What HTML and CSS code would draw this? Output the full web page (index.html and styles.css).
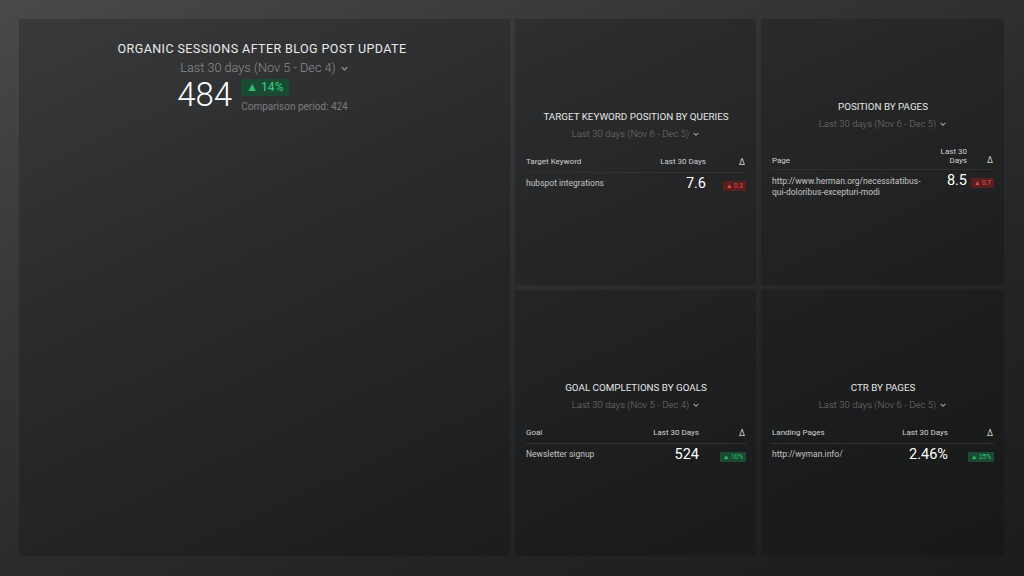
FILE: index.html
```html
<!DOCTYPE html>
<html lang="en">
<head>
<meta charset="utf-8">
<title>Dashboard</title>
<link rel="stylesheet" href="styles.css">
</head>
<body>
<main class="grid">
  <section class="tile tile-big">
    <div class="big-head">
      <h1 class="big-title">ORGANIC SESSIONS AFTER BLOG POST UPDATE</h1>
      <div class="big-sub">Last 30 days (Nov 5 - Dec 4)
        <svg class="chev" viewBox="0 0 10 10" width="9" height="9"><path d="M2 3.5 L5 6.5 L8 3.5" fill="none" stroke="currentColor" stroke-width="1.4"/></svg>
      </div>
      <div class="big-metric">
        <span class="big-num">484</span>
        <div class="big-side">
          <span class="badge badge-up badge-lg">▲ 14%</span>
          <span class="compare">Comparison period: 424</span>
        </div>
      </div>
    </div>
  </section>

  <section class="tile tile-small">
    <div class="inner">
      <h2 class="title">TARGET KEYWORD POSITION BY QUERIES</h2>
      <div class="sub">Last 30 days (Nov 6 - Dec 5)
        <svg class="chev" viewBox="0 0 10 10" width="8" height="8"><path d="M2 3.5 L5 6.5 L8 3.5" fill="none" stroke="currentColor" stroke-width="1.4"/></svg>
      </div>
      <table class="tbl">
        <thead><tr><th class="c-name">Target Keyword</th><th class="c-val">Last 30 Days</th><th class="c-d d40">Δ</th></tr></thead>
        <tbody><tr><td class="c-name">hubspot integrations</td><td class="c-val num">7.6</td><td class="c-d"><span class="badge badge-down">▲ 0.3</span></td></tr></tbody>
      </table>
    </div>
  </section>

  <section class="tile tile-small">
    <div class="inner">
      <h2 class="title">POSITION BY PAGES</h2>
      <div class="sub">Last 30 days (Nov 6 - Dec 5)
        <svg class="chev" viewBox="0 0 10 10" width="8" height="8"><path d="M2 3.5 L5 6.5 L8 3.5" fill="none" stroke="currentColor" stroke-width="1.4"/></svg>
      </div>
      <table class="tbl tbl-wrap">
        <thead><tr><th class="c-name">Page</th><th class="c-val narrow">Last 30<br>Days</th><th class="c-d d27">Δ</th></tr></thead>
        <tbody><tr><td class="c-name">http://www.herman.org/necessitatibus-<br>qui-doloribus-excepturi-modi</td><td class="c-val num">8.5</td><td class="c-d"><span class="badge badge-down">▲ 0.7</span></td></tr></tbody>
      </table>
    </div>
  </section>

  <section class="tile tile-small">
    <div class="inner">
      <h2 class="title">GOAL COMPLETIONS BY GOALS</h2>
      <div class="sub">Last 30 days (Nov 5 - Dec 4)
        <svg class="chev" viewBox="0 0 10 10" width="8" height="8"><path d="M2 3.5 L5 6.5 L8 3.5" fill="none" stroke="currentColor" stroke-width="1.4"/></svg>
      </div>
      <table class="tbl">
        <thead><tr><th class="c-name">Goal</th><th class="c-val">Last 30 Days</th><th class="c-d d47">Δ</th></tr></thead>
        <tbody><tr><td class="c-name">Newsletter signup</td><td class="c-val num">524</td><td class="c-d"><span class="badge badge-up">▲ 10%</span></td></tr></tbody>
      </table>
    </div>
  </section>

  <section class="tile tile-small">
    <div class="inner">
      <h2 class="title">CTR BY PAGES</h2>
      <div class="sub">Last 30 days (Nov 6 - Dec 5)
        <svg class="chev" viewBox="0 0 10 10" width="8" height="8"><path d="M2 3.5 L5 6.5 L8 3.5" fill="none" stroke="currentColor" stroke-width="1.4"/></svg>
      </div>
      <table class="tbl">
        <thead><tr><th class="c-name">Landing Pages</th><th class="c-val">Last 30 Days</th><th class="c-d d46">Δ</th></tr></thead>
        <tbody><tr><td class="c-name">http://wyman.info/</td><td class="c-val num">2.46%</td><td class="c-d"><span class="badge badge-up">▲ 25%</span></td></tr></tbody>
      </table>
    </div>
  </section>
</main>
</body>
</html>
```

FILE: styles.css
```css
* { box-sizing: border-box; }
html, body { margin: 0; height: 100%; }
body {
  width: 1024px;
  height: 576px;
  overflow: hidden;
  font-family: Roboto, "Liberation Sans", sans-serif;
  background: linear-gradient(155deg, #47494b 0%, #333436 35%, #232425 70%, #1b1c1d 100%);
  padding: 19px 20px 20px 19px;
}
.grid {
  display: grid;
  grid-template-columns: 491px 241px 1fr;
  grid-template-rows: 266px 1fr;
  gap: 5px;
  height: 100%;
}
.tile {
  background: rgba(10, 10, 10, 0.22);
  border-radius: 2px;
}
.tile-big {
  grid-row: 1 / 3;
  padding-top: 22px;
}
.big-head {
  display: flex;
  flex-direction: column;
  align-items: center;
}
.big-title {
  margin: 0;
  font-size: 12.5px;
  font-weight: 400;
  letter-spacing: 0.42px;
  color: #e9e9e9;
  line-height: 16px;
  margin-left: -5px;
}
.big-sub {
  margin-top: 3px;
  font-size: 12.7px;
  font-weight: 300;
  color: #8d8d8d;
  line-height: 16px;
  display: flex;
  align-items: center;
  gap: 4px;
}
.chev { color: #9a9a9a; }
.big-metric {
  display: flex;
  align-items: flex-start;
  gap: 9px;
  margin-left: -4px;
}
.big-num {
  font-size: 33px;
  font-weight: 300;
  color: #ffffff;
  line-height: 38px;
}
.big-side {
  display: flex;
  flex-direction: column;
  align-items: flex-start;
  padding-top: 3px;
}
.compare {
  font-size: 10px;
  color: #7c7c7c;
  margin-top: 5px;
}
.badge {
  display: inline-block;
  font-size: 6.5px;
  line-height: 10px;
  padding: 0 3px;
  border-radius: 1px;
}
.badge-lg {
  font-size: 12px;
  font-weight: 500;
  line-height: 17px;
  padding: 0 5px;
  border-radius: 2px;
}
.badge-up { background: #1a4a31; color: #2fc277; }
.badge-down { background: #5a1e1e; color: #e2514f; }

.tile-small {
  display: flex;
  align-items: center;
  justify-content: center;
  padding: 0 10px 0 11px;
}
.inner {
  width: 100%;
  display: flex;
  flex-direction: column;
  align-items: center;
}
.title {
  margin: 0;
  font-size: 9.8px;
  font-weight: 400;
  letter-spacing: 0;
  color: #e6e6e6;
  line-height: 14px;
}
.sub {
  margin-top: 3px;
  font-size: 9.6px;
  font-weight: 300;
  color: #737373;
  line-height: 14px;
  display: flex;
  align-items: center;
  gap: 3px;
}
.tbl {
  margin-top: 16px;
  width: 100%;
  border-collapse: collapse;
}
.tbl th {
  font-size: 8px;
  font-weight: 400;
  color: #d2d2d2;
  padding: 0 0 5px;
  line-height: 10px;
  border-bottom: 1px solid #303132;
  vertical-align: bottom;
}
.tbl td {
  font-size: 8.5px;
  color: #c4c4c4;
  padding: 5px 0 3px;
  line-height: 10px;
  vertical-align: top;
}
.tbl-wrap { margin-bottom: 4px; }
.tbl-wrap th { line-height: 9px; padding-bottom: 4px; }
.tbl-wrap td { line-height: 11px; padding-top: 6px; }
.c-name { text-align: left; }
.c-val { text-align: right; }
.c-d { text-align: right; }
.d40 { width: 40px; }
.d27 { width: 27px; }
.d47 { width: 47px; }
.d46 { width: 46px; }
.tbl th.c-d { font-size: 8.5px; padding-right: 1px; }
.tbl td.num {
  font-size: 14.5px;
  font-weight: 400;
  color: #ffffff;
  line-height: 16px;
  padding-top: 3px;
}
.tbl-wrap td.num { padding-top: 3px; }
.tbl td.c-d { padding-top: 7px; }
.tbl-wrap td.c-d { padding-top: 7px; }
.narrow { width: 40px; }
```
